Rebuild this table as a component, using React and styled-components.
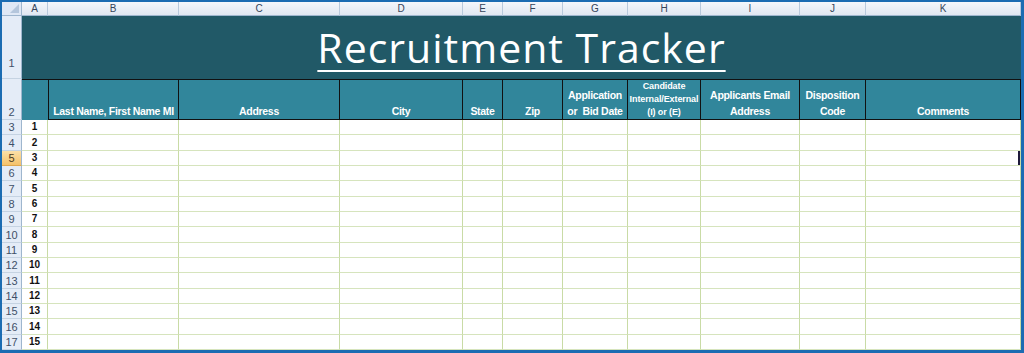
import React from "react";
import styled, { createGlobalStyle, css } from "styled-components";

const GlobalStyle = createGlobalStyle`
  html, body {
    margin: 0;
    padding: 0;
    background: #ffffff;
  }
  body {
    font-family: "Liberation Sans", Arial, sans-serif;
  }
`;

const columns = [
  { letter: "A", width: 26 },
  { letter: "B", width: 131, label: "Last Name, First Name MI" },
  { letter: "C", width: 161, label: "Address" },
  { letter: "D", width: 123, label: "City" },
  { letter: "E", width: 40, label: "State" },
  { letter: "F", width: 60, label: "Zip" },
  { letter: "G", width: 65, label: "Application\nor  Bid Date" },
  { letter: "H", width: 73, label: "Candidate\nInternal/External\n(I) or (E)", small: true },
  { letter: "I", width: 99, label: "Applicants Email\nAddress" },
  { letter: "J", width: 66, label: "Disposition\nCode" },
  { letter: "K", width: 155, label: "Comments" },
];

const dataRows = Array.from({ length: 15 }, (_, i) => i + 1);
const SELECTED_ROW = 5;

const Frame = styled.div`
  width: 1024px;
  height: 353px;
  box-sizing: border-box;
  border-style: solid;
  border-color: #1b6cb2;
  border-width: 2px 3px 3px 2px;
  background: #ffffff;
  display: grid;
  grid-template-columns: 20px ${columns.map((c) => `${c.width}px`).join(" ")};
  grid-template-rows: 14px 63px 41px repeat(5, 15px 16px 15px);
  overflow: hidden;
`;

const Corner = styled.div`
  position: relative;
  background: #dfe8f5;
  border-right: 1px solid #9eb6ce;
  border-bottom: 1px solid #9eb6ce;
  box-sizing: border-box;

  &::after {
    content: "";
    position: absolute;
    right: 2px;
    bottom: 2px;
    width: 9px;
    height: 9px;
    background: #b4c6dc;
    clip-path: polygon(100% 0, 100% 100%, 0 100%);
  }
`;

const ColHead = styled.div`
  display: flex;
  align-items: center;
  justify-content: center;
  background: linear-gradient(#f4f7fb, #e0e7f1);
  border-right: 1px solid #b8c9dc;
  border-bottom: 1px solid #9eb6ce;
  box-sizing: border-box;
  font-size: 10px;
  color: #34445a;
`;

const RowHead = styled.div`
  display: flex;
  align-items: flex-end;
  justify-content: center;
  padding-bottom: ${(p) => p.$lift || 1}px;
  box-sizing: border-box;
  background: #e4ecf7;
  border-right: 1px solid #9eb6ce;
  border-bottom: 1px solid #c5d3e2;
  font-size: 11px;
  line-height: 12px;
  color: #3f5068;

  ${(p) =>
    p.$selected &&
    css`
      background: linear-gradient(#fbe0a8, #f4c26b);
      border-bottom-color: #e0a84e;
      color: #4a3a22;
    `}
`;

const TitleCell = styled.div`
  grid-column: 2 / span 11;
  display: flex;
  align-items: flex-start;
  justify-content: center;
  background: #215967;
  padding-top: 8px;
  box-sizing: border-box;
`;

const Title = styled.span`
  font-family: "Open Sans", Lato, sans-serif;
  font-size: 41px;
  letter-spacing: 1px;
  line-height: 46px;
  color: #ffffff;
  text-decoration: underline;
  text-decoration-thickness: 2px;
  text-underline-offset: 7px;
`;

const HeadCell = styled.div`
  display: flex;
  align-items: flex-end;
  justify-content: center;
  box-sizing: border-box;
  background: #31869b;
  border-top: 1px solid #111;
  border-right: 1px solid #111;
  border-bottom: 1px solid #111;
  ${(p) => p.$first && "border-left: 1px solid #111;"}
  white-space: pre;
  text-align: center;
  color: #ffffff;
  font-weight: bold;
  font-size: 10.5px;
  letter-spacing: -0.3px;
  line-height: 16px;

  ${(p) =>
    p.$small &&
    css`
      font-size: 9px;
      letter-spacing: -0.1px;
      line-height: 13px;
    `}
`;

const BlankHead = styled.div`
  background: #31869b;
  border-top: 1px solid #111;
  box-sizing: border-box;
`;

const NumCell = styled.div`
  display: flex;
  align-items: flex-end;
  justify-content: center;
  box-sizing: border-box;
  border-right: 1px solid #c9dba6;
  border-bottom: 1px solid #d6e4bd;
  font-size: 10px;
  line-height: 12px;
  font-weight: bold;
  color: #111;
  padding-bottom: 1px;
`;

const DataCell = styled.div`
  box-sizing: border-box;
  border-right: 1px solid #c9dba6;
  border-bottom: 1px solid #d6e4bd;
  background: #ffffff;
  ${(p) => p.$marked && "box-shadow: inset -2px 0 0 #1e1a3a;"}
`;

export default function App() {
  return (
    <>
      <GlobalStyle />
      <Frame>
        <Corner />
        {columns.map((c) => (
          <ColHead key={c.letter}>{c.letter}</ColHead>
        ))}

        <RowHead $lift={9}>1</RowHead>
        <TitleCell>
          <Title>Recruitment Tracker</Title>
        </TitleCell>

        <RowHead $lift={1}>2</RowHead>
        <BlankHead />
        {columns.slice(1).map((c, i) => (
          <HeadCell key={c.letter} $small={c.small} $first={i === 0}>
            {c.label}
          </HeadCell>
        ))}

        {dataRows.map((n) => (
          <React.Fragment key={n}>
            <RowHead $selected={n + 2 === SELECTED_ROW}>{n + 2}</RowHead>
            <NumCell>{n}</NumCell>
            {columns.slice(1).map((c) => (
              <DataCell
                key={c.letter}
                $marked={c.letter === "K" && n + 2 === SELECTED_ROW}
              />
            ))}
          </React.Fragment>
        ))}
      </Frame>
    </>
  );
}
